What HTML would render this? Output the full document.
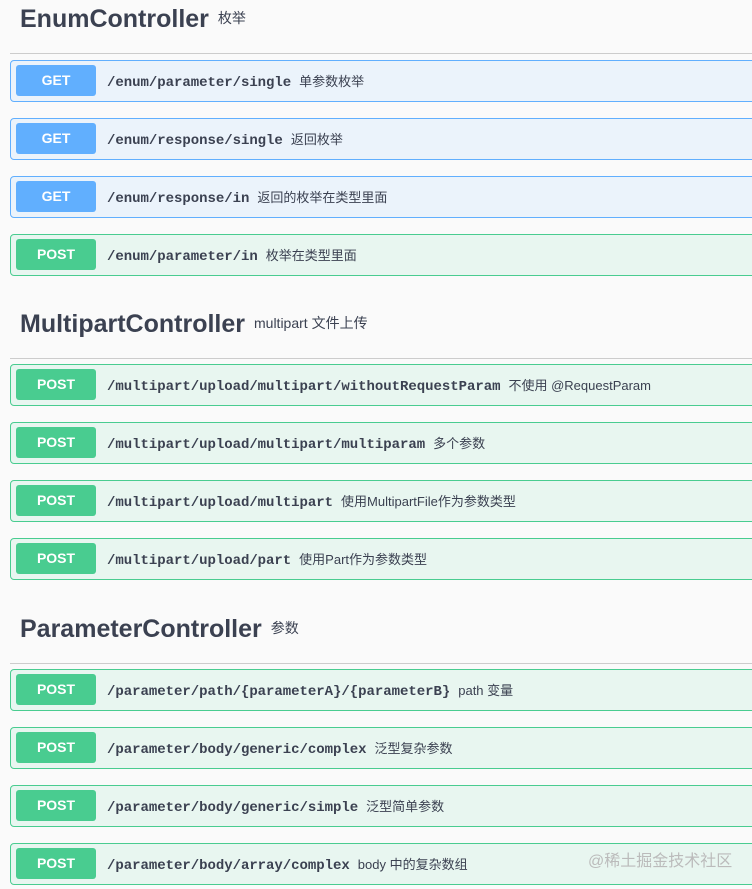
<!DOCTYPE html>
<html><head><meta charset="utf-8"><style>
body{margin:0;width:752px;height:889px;background:#fafafa;overflow:hidden;position:relative;font-family:"Liberation Sans","Noto Sans CJK SC",sans-serif;color:#3b4151}
.h{position:absolute;left:20px;font-size:25px;font-weight:bold;white-space:nowrap}
.h small{font-size:14px;font-weight:normal;margin-left:9px;vertical-align:4px}
.ln{position:absolute;left:10px;right:0;height:1px;background:#ccc}
.op{position:absolute;left:10px;width:760px;height:40px;border:1px solid;border-radius:4px;box-sizing:content-box}
.get{background:#ebf3fb;border-color:#61affe}
.post{background:#e8f6f0;border-color:#49cc90}
.b{position:absolute;left:5px;top:4px;width:80px;height:31px;border-radius:3px;color:#fff;font-weight:bold;font-size:14px;text-align:center;line-height:31px}
.get .b{background:#61affe}.post .b{background:#49cc90}
.p{position:absolute;left:96px;top:10px;font-family:"Liberation Mono","Noto Sans CJK SC",monospace;font-weight:bold;font-size:14px;letter-spacing:-0.03px;white-space:nowrap}
.p span{font-family:"Liberation Sans","Noto Sans CJK SC",sans-serif;font-weight:normal;font-size:13px;margin-left:8px;letter-spacing:0}
.wm{position:absolute;left:588px;top:847px;font-size:16px;color:#bbb}
</style></head><body>
<div class="h" style="top:5px">EnumController<small>枚举</small></div>
<div class="ln" style="top:53px"></div>
<div class="op get" style="top:60px"><div class="b">GET</div><div class="p">/enum/parameter/single<span>单参数枚举</span></div></div>
<div class="op get" style="top:118px"><div class="b">GET</div><div class="p">/enum/response/single<span>返回枚举</span></div></div>
<div class="op get" style="top:176px"><div class="b">GET</div><div class="p">/enum/response/in<span>返回的枚举在类型里面</span></div></div>
<div class="op post" style="top:234px"><div class="b">POST</div><div class="p">/enum/parameter/in<span>枚举在类型里面</span></div></div>

<div class="h" style="top:310px">MultipartController<small>multipart 文件上传</small></div>
<div class="ln" style="top:358px"></div>
<div class="op post" style="top:364px"><div class="b">POST</div><div class="p">/multipart/upload/multipart/withoutRequestParam<span>不使用 @RequestParam</span></div></div>
<div class="op post" style="top:422px"><div class="b">POST</div><div class="p">/multipart/upload/multipart/multiparam<span>多个参数</span></div></div>
<div class="op post" style="top:480px"><div class="b">POST</div><div class="p">/multipart/upload/multipart<span>使用MultipartFile作为参数类型</span></div></div>
<div class="op post" style="top:538px"><div class="b">POST</div><div class="p">/multipart/upload/part<span>使用Part作为参数类型</span></div></div>

<div class="h" style="top:615px">ParameterController<small>参数</small></div>
<div class="ln" style="top:663px"></div>
<div class="op post" style="top:669px"><div class="b">POST</div><div class="p">/parameter/path/{parameterA}/{parameterB}<span>path 变量</span></div></div>
<div class="op post" style="top:727px"><div class="b">POST</div><div class="p">/parameter/body/generic/complex<span>泛型复杂参数</span></div></div>
<div class="op post" style="top:785px"><div class="b">POST</div><div class="p">/parameter/body/generic/simple<span>泛型简单参数</span></div></div>
<div class="op post" style="top:843px"><div class="b">POST</div><div class="p">/parameter/body/array/complex<span>body 中的复杂数组</span></div></div>
<div class="wm">@稀土掘金技术社区</div>
</body></html>
